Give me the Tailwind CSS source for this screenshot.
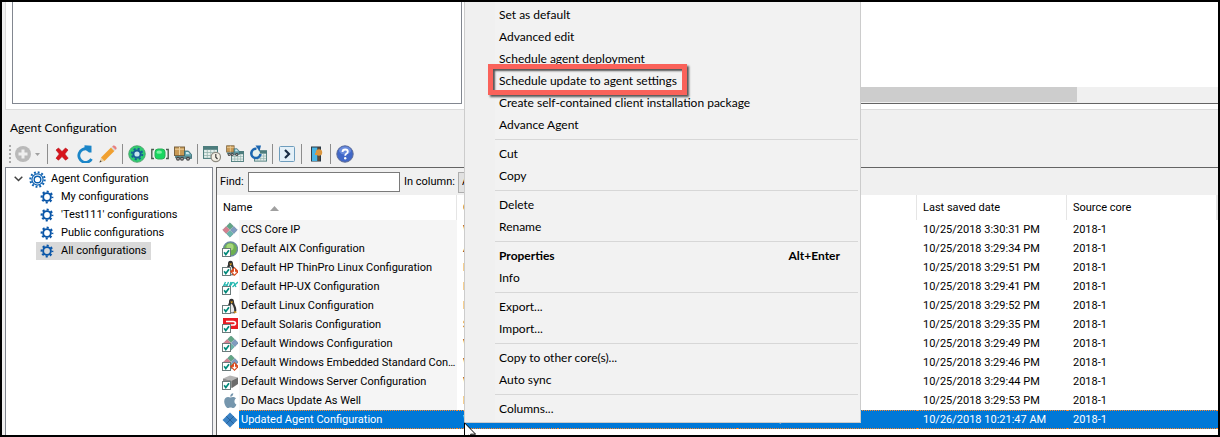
<!DOCTYPE html>
<html lang="en">
<head>
    <meta charset="UTF-8">
    <meta name="viewport" content="width=device-width, initial-scale=1.0">
    <title>Agent Configuration</title>
    <script src="https://cdn.jsdelivr.net/npm/@tailwindcss/browser@4"></script>
</head>
<body class="relative h-screen overflow-hidden flex flex-col border-2 border-black bg-[#f0f0f0] text-black text-[11px] font-['Roboto','Liberation_Sans',sans-serif]">

    <!-- Shared icon shapes -->
    <svg class="hidden" aria-hidden="true">
        <symbol id="gear" viewBox="0 0 16 16">
            <circle cx="8" cy="8" r="4.4" fill="none" stroke="#0a56a8" stroke-width="2.2"/>
            <circle cx="8" cy="8" r="6.2" fill="none" stroke="#0a56a8" stroke-width="2.2" stroke-dasharray="2.435 2.435" stroke-dashoffset="1.2"/>
        </symbol>
        <symbol id="gear-big" viewBox="0 0 18 18">
            <circle cx="9" cy="9" r="7.6" fill="none" stroke="#0a5fb0" stroke-width="2.2" stroke-dasharray="2 1.98"/>
            <circle cx="9" cy="9" r="5.9" fill="#fff" stroke="#0a5fb0" stroke-width="1.3"/>
            <circle cx="9" cy="9" r="3.5" fill="#fff" stroke="#0a5fb0" stroke-width="1.5"/>
        </symbol>
        <symbol id="check" viewBox="0 0 9 9">
            <rect x=".5" y=".5" width="8" height="8" fill="#fff" stroke="#6b7b7b"/>
            <path d="M2.2 4.2 3.8 6.6 7 2.2" fill="none" stroke="#008a7a" stroke-width="1.7"/>
        </symbol>
        <symbol id="tiles" viewBox="0 0 16 16">
            <path d="M8 .8 11.4 4.2 8 7.6 4.6 4.2Z" fill="#62a585" stroke="#4d8577" stroke-width=".5"/>
            <path d="M4.100 4.600 7.500 8 4.100 11.400.7 8Z" fill="#d5808f" stroke="#9a6474" stroke-width=".5"/>
            <path d="M11.900 4.600 15.300 8 11.900 11.400 8.500 8Z" fill="#7f9cc0" stroke="#5a7598" stroke-width=".5"/>
            <path d="M8 8.400 11.400 11.800 8 15.200 4.600 11.800Z" fill="#69b5ac" stroke="#4d8580" stroke-width=".5"/>
        </symbol>
        <symbol id="tux" viewBox="0 0 16 16">
            <path d="M9.500.8C7.500.8 6.800 2.200 7 4.500 6.800 6.500 4.500 8.500 4.600 12.500L6.500 15.200H13L14.400 12.500C14.400 8.500 12.200 6.500 12.100 4.500 12.100 2.200 11.500.8 9.500.8Z" fill="#333"/>
            <path d="M9.600 5.500C8 7.500 7 9.500 7.200 12.500L8.500 14.500H11.500L12.200 12.500C12.200 9.500 11 7.500 9.600 5.500Z" fill="#e8e8e8"/>
            <path d="M8.200 3.600H11.200L9.700 5.500Z" fill="#e4a11c"/>
            <path d="M4.500 13.500 7.500 15.500H4ZM12 13 15.300 14 12.500 15.600Z" fill="#e4a11c"/>
        </symbol>
        <symbol id="down-badge" viewBox="0 0 10 10">
            <path d="M5 0 10 5 5 10 0 5Z" fill="#d9481c"/>
            <path d="M5 2V7.500M3 5.500 5 7.600 7 5.500" fill="none" stroke="#fff" stroke-width="1.200"/>
        </symbol>
        <symbol id="grid" viewBox="0 0 14 12">
            <rect x=".5" y=".5" width="13" height="11" fill="#e6efec" stroke="#4d7d7d"/>
            <rect x="0" y="0" width="14" height="3.500" fill="#4d7d7d"/>
            <path d="M1 6H13M1 8.800H13M4 3.500V11M7.200 3.500V11M10.400 3.500V11" stroke="#8fb0aa" stroke-width=".7"/>
        </symbol>
        <symbol id="truck" viewBox="0 0 18 16">
            <rect x=".5" y="1" width="10" height="8.500" fill="#c99a55" stroke="#7a6340"/>
            <path d="M5.500 1V9M1 3.200H10" stroke="#ecd3a2" stroke-width="1"/>
            <path d="M10.500 5H14.500L17.500 8.500V12.500H10.500Z" fill="#62a5ae" stroke="#34646d" stroke-width=".8"/>
            <path d="M12 6H14.200L15.800 8.200H12Z" fill="#cfe9ee"/>
            <rect x="1" y="10" width="16" height="2.200" fill="#5c8a90"/>
            <circle cx="4" cy="12.800" r="2" fill="#444"/><circle cx="8" cy="12.800" r="2" fill="#444"/><circle cx="14" cy="12.800" r="2" fill="#444"/>
            <circle cx="4" cy="12.800" r=".8" fill="#ccc"/><circle cx="8" cy="12.800" r=".8" fill="#ccc"/><circle cx="14" cy="12.800" r=".8" fill="#ccc"/>
        </symbol>
    </svg>

    <!-- Upper panes -->
    <section class="ml-[3px] flex h-[108px] shrink-0 gap-[2px] border-b border-l border-[#dcdcdc] bg-white pb-[5px] pl-[6px]">
        <div class="w-[450px] shrink-0 border-x border-b border-[#828790]"></div>
        <div class="flex flex-1 flex-col justify-end border-b border-l border-[#646464]">
            <div class="h-4 bg-[#f0f0f0] pb-px">
                <div class="h-[15px] w-[612px] bg-[#cdcdcd]"></div>
            </div>
        </div>
    </section>

    <h1 class="flex h-8 shrink-0 items-center pt-1 pl-2 font-['Lato',sans-serif] text-[12px]">Agent Configuration</h1>

    <!-- Toolbar -->
    <div role="toolbar" aria-label="Agent configuration" class="flex h-[25px] shrink-0 items-center pb-px pl-[7px]">
        <span class="mr-[3px] h-[18px] border-l-2 border-dotted border-[#a8a8a8]"></span>
        <button type="button" aria-label="New" class="flex w-[30px] items-center gap-[3px]">
            <svg class="size-[18px] shrink-0" viewBox="0 0 18 18"><circle cx="9" cy="9" r="8" fill="#b9b9b9"/><path d="M9 4.500V13.500M4.500 9H13.500" stroke="#eee" stroke-width="3"/></svg>
            <svg class="h-[3px] w-[5px]" viewBox="0 0 5 3"><path d="M0 0H5L2.500 3Z" fill="#a0a0a0"/></svg>
        </button>
        <span class="ml-[3px] mr-[2px] h-5 w-px bg-[#8d8d8d]"></span>
        <button type="button" aria-label="Delete" class="flex w-[23px] justify-center">
            <svg class="size-[18px]" viewBox="0 0 18 18"><path d="M3 5 5.500 3 9 6.500 12.500 3 15 5 11.800 9 15.200 13.200 12.500 15.200 9 11.600 5.500 15.200 3 13.200 6.300 9Z" fill="#d8141c" stroke="#b40d14" stroke-width=".6"/></svg>
        </button>
        <button type="button" aria-label="Refresh" class="flex w-[23px] justify-center">
            <svg class="size-[18px]" viewBox="0 0 18 18"><path d="M15.500 14A6.800 6.800 0 1 1 11.500 4" fill="none" stroke="#1c86c8" stroke-width="2.800"/><path d="M8.500.2 15.500.8V7.400H13L8.500 4Z" fill="#1c86c8"/></svg>
        </button>
        <button type="button" aria-label="Edit" class="flex w-[23px] justify-center">
            <svg class="size-[18px]" viewBox="0 0 18 18"><path d="M.5 17.500 2 12.500 5.500 16Z" fill="#e9cfa2"/><path d="M.5 17.500 1.200 15.300 2.700 16.800Z" fill="#444"/><path d="M2 12.500 12 2.600 15.400 6 5.500 16Z" fill="#f0a030"/><path d="M12 2.600 13.200 1.500 16.600 4.800 15.400 6Z" fill="#d8d8d8"/><path d="M13.200 1.500 14.200.6Q15.500.2 17 1.700 18 3 17.500 4L16.600 4.800Z" fill="#e88080"/></svg>
        </button>
        <span class="ml-[3px] mr-[2px] h-5 w-px bg-[#8d8d8d]"></span>
        <button type="button" aria-label="Agent settings" class="flex w-[23px] justify-center">
            <svg class="size-[18px]" viewBox="0 0 18 18"><circle cx="9" cy="9" r="8.300" fill="#2fce70" stroke="#4a9a68" stroke-width=".8"/><circle cx="9" cy="9" r="3.600" fill="#c7e6ee" stroke="#175f96" stroke-width="2"/><circle cx="9" cy="9" r="5.300" fill="none" stroke="#175f96" stroke-width="1.800" stroke-dasharray="2.080 2.080"/></svg>
        </button>
        <button type="button" aria-label="Discover" class="flex w-[23px] justify-center">
            <svg class="size-[18px]" viewBox="0 0 18 18"><path d="M3 4.500H.8V13.500H3M15 4.500H17.200V13.500H15" fill="none" stroke="#4c5c50" stroke-width="1.400"/><rect x="4" y="4" width="10" height="10" rx="3" fill="#18d860" stroke="#2cae58"/><ellipse cx="8.200" cy="7.200" rx="2.800" ry="1.600" fill="#7bf2a2"/></svg>
        </button>
        <button type="button" aria-label="Deploy" class="flex w-[23px] justify-center">
            <svg class="h-4 w-[18px]"><use href="#truck"/></svg>
        </button>
        <span class="ml-[3px] mr-[2px] h-5 w-px bg-[#8d8d8d]"></span>
        <button type="button" aria-label="Schedule" class="flex w-[23px] justify-center">
            <svg class="size-[18px]" viewBox="0 0 18 18"><use href="#grid" x="0" y="1" width="15" height="13"/><circle cx="12.800" cy="12" r="4.700" fill="#f2efe4" stroke="#8d8a80" stroke-width="1.200"/><path d="M12.800 9V12.200L14.500 14" fill="none" stroke="#333" stroke-width="1.100"/></svg>
        </button>
        <button type="button" aria-label="Schedule deployment" class="flex w-[23px] justify-center">
            <svg class="size-[18px]" viewBox="0 0 18 18"><use href="#grid" x="5" y="6" width="13" height="11"/><use href="#truck" x="0" y="0" width="14" height="12"/></svg>
        </button>
        <button type="button" aria-label="Schedule update" class="flex w-[23px] justify-center">
            <svg class="size-[18px]" viewBox="0 0 18 18"><use href="#grid" x="5" y="5" width="13" height="12"/><circle cx="7" cy="8.500" r="4" fill="#e6efec"/><path d="M11.500 9A4.600 4.600 0 1 1 7.500 3.800" fill="none" stroke="#1c66b0" stroke-width="2.600"/><path d="M6.500.5H12L10.500 6.500Z" fill="#1c66b0"/></svg>
        </button>
        <span class="ml-[3px] mr-[2px] h-5 w-px bg-[#8d8d8d]"></span>
        <button type="button" aria-label="Run" class="flex w-[23px] justify-center">
            <svg class="size-[18px]" viewBox="0 0 18 18"><rect x="1.500" y="1.500" width="15" height="15" rx="1" fill="#e4f0f8" stroke="#6e9dbd"/><path d="M7 5 11 9 7 13" fill="none" stroke="#1a2c44" stroke-width="2.200"/></svg>
        </button>
        <span class="ml-[3px] mr-[2px] h-5 w-px bg-[#8d8d8d]"></span>
        <button type="button" aria-label="Exit" class="flex w-[23px] justify-center">
            <svg class="size-[18px]" viewBox="0 0 18 18"><rect x="4" y="1.500" width="10" height="15" fill="#2a3844"/><path d="M5 2.500H10.500V16H5Z" fill="#48b4e4"/><path d="M10.500 2.500H13V16H10.500Z" fill="#5c4a38"/><circle cx="12" cy="7.500" r="3.200" fill="#d99640"/><path d="M8 8H11V10H8Z" fill="#d99640"/></svg>
        </button>
        <span class="ml-[3px] mr-[2px] h-5 w-px bg-[#8d8d8d]"></span>
        <button type="button" aria-label="Help" class="flex w-[23px] justify-center">
            <svg class="size-[18px]" viewBox="0 0 18 18"><circle cx="9" cy="9" r="8.200" fill="#4168c8" stroke="#5d6c96" stroke-width="1"/><ellipse cx="9" cy="5.500" rx="6" ry="4" fill="#6a8cdc"/><path d="M6.500 7Q6.500 4.500 9.200 4.500 11.800 4.500 11.800 6.800 11.800 8 10.300 8.800 9.200 9.500 9.200 10.800" fill="none" stroke="#fff" stroke-width="1.800"/><circle cx="9.200" cy="13.300" r="1.200" fill="#fff"/></svg>
        </button>
    </div>

    <main class="ml-[3px] flex min-h-0 flex-1 gap-[3px]">
        <!-- Tree -->
        <nav aria-label="Configurations" class="w-[208px] shrink-0 border-x border-t border-[#828790] bg-white pt-[2px] pl-2 leading-[18px]">
            <div class="flex items-center">
                <svg class="mr-[6px] h-[6px] w-[9px]" viewBox="0 0 9 6"><path d="M.7.7 4.500 4.500 8.300.7" fill="none" stroke="#404040" stroke-width="1.500"/></svg>
                <svg class="mr-[5px] size-[17px]"><use href="#gear-big"/></svg>
                <a href="#">Agent Configuration</a>
            </div>
            <ul class="flex flex-col items-start pl-[22px]">
                <li><a href="#" class="flex items-center gap-[7px] pr-1 pl-1"><svg class="size-[14px]"><use href="#gear"/></svg>My configurations</a></li>
                <li><a href="#" class="flex items-center gap-[7px] pr-1 pl-1"><svg class="size-[14px]"><use href="#gear"/></svg>'Test111' configurations</a></li>
                <li><a href="#" class="flex items-center gap-[7px] pr-1 pl-1"><svg class="size-[14px]"><use href="#gear"/></svg>Public configurations</a></li>
                <li><a href="#" aria-current="true" class="flex items-center gap-[7px] bg-[#d9d9d9] pr-1 pl-1"><svg class="size-[14px]"><use href="#gear"/></svg>All configurations</a></li>
            </ul>
        </nav>

        <!-- List -->
        <section class="min-w-0 flex-1 overflow-hidden border-t border-l border-[#646464] bg-white">
            <form class="flex h-[27px] items-center bg-[#f0f0f0] pt-px pl-[3px]">
                <label for="find" class="w-7">Find:</label>
                <input id="find" type="text" class="h-5 w-[152px] border border-[#7a7a7a] bg-white px-1 outline-none">
                <label for="column" class="w-[58px] pl-1">In column:</label>
                <select id="column" class="h-[21px] w-[140px] appearance-none border border-[#adadad] bg-[#e1e1e1] px-[3px]">
                    <option>All columns</option>
                </select>
            </form>
            <table class="w-full table-fixed border-separate border-spacing-0 text-left leading-[18px] whitespace-nowrap">
                <colgroup>
                    <col class="w-[22px]"><col class="w-[218px]"><col class="w-[101px]"><col class="w-[179px]"><col class="w-[180px]"><col class="w-[150px]"><col class="w-[150px]"><col>
                </colgroup>
                <thead>
                    <tr class="h-[25px] *:border-r *:border-[#e5e5e5] *:pt-px *:font-normal">
                        <th colspan="2" class="pl-[6px]"><span class="flex items-center gap-[18px]">Name<svg class="h-[5px] w-[9px]" viewBox="0 0 9 5"><path d="M0 5 4.500 0 9 5Z" fill="#a0a0a0"/></svg></span></th>
                        <th class="pl-[6px]">OS type</th>
                        <th class="pl-[6px]">Owner</th>
                        <th class="pl-[6px]">Last saved by</th>
                        <th class="pl-[6px]">Last saved date</th>
                        <th class="pl-[6px]">Source core</th>
                        <th></th>
                    </tr>
                </thead>
                <tbody class="[&_td]:h-[19px] [&_td]:p-0 [&_td:nth-child(n+2)]:pt-px [&_td:nth-child(2)]:bg-[#f5f5f5] [&_td:nth-child(2)]:pl-[2px] [&_td:nth-child(2)]:truncate [&_td:nth-child(n+3)]:pl-[6px] [&_svg]:ml-[5px] [&_svg]:size-4">
                    <tr>
                        <td><svg><use href="#tiles"/></svg></td>
                        <td>CCS Core IP</td><td>Windows</td><td>Public User</td><td></td><td>10/25/2018 3:30:31 PM</td><td>2018-1</td><td></td>
                    </tr>
                    <tr>
                        <td><svg viewBox="0 0 16 16"><circle cx="8.500" cy="8" r="7" fill="#6cb050" stroke="#6b8aa0" stroke-width="1.400"/><circle cx="8" cy="6" r="3.600" fill="#a5d67c"/><use href="#check" x="0" y="7" width="9" height="9"/></svg></td>
                        <td>Default AIX Configuration</td><td>AIX</td><td>Public User</td><td></td><td>10/25/2018 3:29:34 PM</td><td>2018-1</td><td></td>
                    </tr>
                    <tr>
                        <td><svg viewBox="0 0 16 16"><use href="#tux" x="-1" width="16" height="16"/><use href="#check" x="0" y="7" width="9" height="9"/><use href="#down-badge" x="8" y="7" width="9" height="9"/></svg></td>
                        <td>Default HP ThinPro Linux Configuration</td><td>Linux</td><td>Public User</td><td></td><td>10/25/2018 3:29:51 PM</td><td>2018-1</td><td></td>
                    </tr>
                    <tr>
                        <td><svg viewBox="0 0 16 16"><path d="M3.500 3 1 8M6.500 3 4 9M2 6H5.500M9 3 6.500 10M7 6.500Q9 7.500 10.500 3M10.500 8 16 3M11.500 3 14 8" fill="none" stroke="#22b8b0" stroke-width="1.300"/><use href="#check" x="0" y="7" width="9" height="9"/></svg></td>
                        <td>Default HP-UX Configuration</td><td>HP-UX</td><td>Public User</td><td></td><td>10/25/2018 3:29:41 PM</td><td>2018-1</td><td></td>
                    </tr>
                    <tr>
                        <td><svg viewBox="0 0 16 16"><use href="#tux" width="16" height="16"/><use href="#check" x="0" y="7" width="9" height="9"/></svg></td>
                        <td>Default Linux Configuration</td><td>Linux</td><td>Public User</td><td></td><td>10/25/2018 3:29:52 PM</td><td>2018-1</td><td></td>
                    </tr>
                    <tr>
                        <td><svg viewBox="0 0 16 16"><rect x="1" y="1" width="15" height="11" fill="#e81c24"/><path d="M4 4.500H11Q13.500 4.500 13.500 6.300 13.500 8 11 8H8" fill="none" stroke="#fff" stroke-width="1.700"/><use href="#check" x="0" y="7" width="9" height="9"/></svg></td>
                        <td>Default Solaris Configuration</td><td>Solaris</td><td>Public User</td><td></td><td>10/25/2018 3:29:35 PM</td><td>2018-1</td><td></td>
                    </tr>
                    <tr>
                        <td><svg viewBox="0 0 16 16"><use href="#tiles" x="1" y="-1" width="16" height="16"/><use href="#check" x="0" y="7" width="9" height="9"/></svg></td>
                        <td>Default Windows Configuration</td><td>Windows</td><td>Public User</td><td></td><td>10/25/2018 3:29:49 PM</td><td>2018-1</td><td></td>
                    </tr>
                    <tr>
                        <td><svg viewBox="0 0 16 16"><use href="#tiles" x="1" y="-1" width="16" height="16"/><use href="#check" x="0" y="7" width="9" height="9"/><use href="#down-badge" x="8" y="7" width="9" height="9"/></svg></td>
                        <td>Default Windows Embedded Standard Configuration</td><td>Windows</td><td>Public User</td><td></td><td>10/25/2018 3:29:46 PM</td><td>2018-1</td><td></td>
                    </tr>
                    <tr>
                        <td><svg viewBox="0 0 16 16"><path d="M1 4.500 8 1.500 16 3.500 10 6.500Z" fill="#b4b4b4"/><path d="M1 4.500 10 6.500V14L1 11Z" fill="#8d8d8d"/><path d="M10 6.500 16 3.500V10L10 14Z" fill="#6c6c6c"/><use href="#check" x="0" y="7" width="9" height="9"/></svg></td>
                        <td>Default Windows Server Configuration</td><td>Windows</td><td>Public User</td><td></td><td>10/25/2018 3:29:44 PM</td><td>2018-1</td><td></td>
                    </tr>
                    <tr>
                        <td><svg viewBox="0 0 16 16"><path d="M8.200 4.500C6 3.300 2.300 4 2.200 8.200 2.200 11.500 4.400 15 6 15 7 15 7.400 14.400 8.600 14.400 9.800 14.400 10.200 15 11.200 15 12.600 15 13.900 12.800 14.400 11.400 12 10.300 11.800 6.800 14 5.500 12.500 3.600 10.200 3.700 8.200 4.500Z" fill="#7596ad"/><path d="M8.200 3.800C8 2 9.500.4 11.300.3 11.400 2.200 10 3.700 8.200 3.800Z" fill="#7596ad"/></svg></td>
                        <td>Do Macs Update As Well</td><td>Mac</td><td>Public User</td><td></td><td>10/25/2018 3:29:53 PM</td><td>2018-1</td><td></td>
                    </tr>
                    <tr aria-selected="true" class="text-white [&_td:nth-child(n+2)]:border-y [&_td:nth-child(n+2)]:border-dotted [&_td:nth-child(n+2)]:border-[#ff8728] [&_td:nth-child(n+2)]:bg-[#0078d7]! [&_td:nth-child(n+2)]:leading-[16px]">
                        <td><svg viewBox="0 0 16 16"><path d="M8 .5 15.500 8 8 15.500.5 8Z" fill="#3a82c4"/><path d="M4.200 4.200 11.800 11.800M11.800 4.200 4.200 11.800" stroke="#22588f" stroke-width=".8"/></svg></td>
                        <td>Updated Agent Configuration</td><td>Windows</td><td>Public User</td><td>LDLAB\Watson</td><td>10/26/2018 10:21:47 AM</td><td>2018-1</td><td></td>
                    </tr>
                </tbody>
            </table>
        </section>
    </main>

    <!-- Context menu -->
    <div role="menu" class="absolute top-0 left-[462px] w-[397px] border-x border-b border-[#ccc] bg-[linear-gradient(to_right,#f0f0f0_30px,#f2f2f2_30px)] py-[2px] font-['Lato',sans-serif] text-[12px] leading-[22px] [&_button]:flex [&_button]:h-[22px] [&_button]:w-full [&_button]:justify-between [&_button]:pr-5 [&_button]:pl-[34px] [&_hr]:my-[3px] [&_hr]:mr-[2px] [&_hr]:ml-[30px] [&_hr]:border-[#d7d7d7]">
        <button type="button" role="menuitem">Set as default</button>
        <button type="button" role="menuitem">Advanced edit</button>
        <button type="button" role="menuitem">Schedule agent deployment</button>
        <button type="button" role="menuitem">Schedule update to agent settings</button>
        <button type="button" role="menuitem">Create self-contained client installation package</button>
        <button type="button" role="menuitem">Advance Agent</button>
        <hr>
        <button type="button" role="menuitem">Cut</button>
        <button type="button" role="menuitem">Copy</button>
        <hr>
        <button type="button" role="menuitem">Delete</button>
        <button type="button" role="menuitem">Rename</button>
        <hr>
        <button type="button" role="menuitem" class="font-bold">Properties<span>Alt+Enter</span></button>
        <button type="button" role="menuitem">Info</button>
        <hr>
        <button type="button" role="menuitem">Export...</button>
        <button type="button" role="menuitem">Import...</button>
        <hr>
        <button type="button" role="menuitem">Copy to other core(s)...</button>
        <button type="button" role="menuitem">Auto sync</button>
        <hr>
        <button type="button" role="menuitem">Columns...</button>
    </div>

    <!-- Highlight box around the menu item -->
    <div class="pointer-events-none absolute top-[62px] left-[486px] h-[31px] w-[199px] border-5 border-[#fa625a] shadow-[2px_2px_2px_#555,inset_2px_2px_2px_#555]"></div>

    <!-- Mouse pointer -->
    <svg class="pointer-events-none absolute top-[420px] left-[462px] h-[19px] w-3" viewBox="0 0 12 19"><path d="M.5.8V16.500L4.200 13 6.700 18.500 9 17.500 6.600 12.200H11.600Z" fill="#fff" stroke="#000"/></svg>
</body>
</html>
